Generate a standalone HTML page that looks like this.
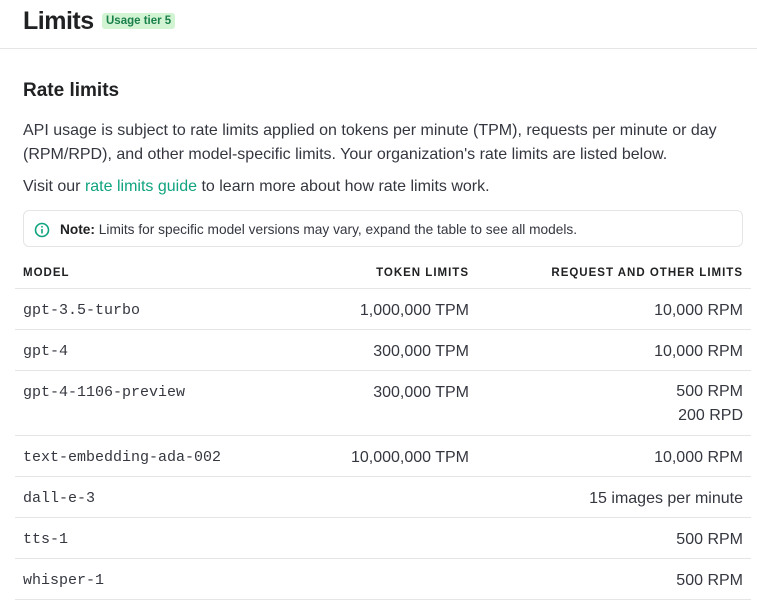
<!DOCTYPE html>
<html><head><style>
*{margin:0;padding:0;box-sizing:border-box}
body{width:757px;height:603px;overflow:hidden;background:#fff;font-family:"Liberation Sans",sans-serif;color:#202123}
.hdr{height:49px;border-bottom:1px solid #e5e5e5;position:relative}
h1{position:absolute;left:23px;top:7px;font-size:25px;font-weight:bold;letter-spacing:-0.5px}
.badge{position:absolute;left:102px;top:13px;height:16px;padding:0 4px;background:#d2f4d3;color:#1a7f4b;font-size:11.5px;font-weight:bold;border-radius:3px;line-height:16px}
h2{position:absolute;left:23px;top:80px;font-size:19px;font-weight:bold}
p{position:absolute;left:23px;font-size:16px;color:#353740;line-height:24px}
a{color:#10a37f;text-decoration:none}
.note{position:absolute;left:23px;top:210px;width:720px;height:37px;border:1px solid #e5e5e5;border-radius:6px;font-size:13.7px;color:#353740;line-height:37px;padding-left:36px}
.note svg{position:absolute;left:10px;top:11px}
table{position:absolute;left:15px;top:258px;width:736px;border-collapse:collapse}
th{font-size:11.5px;letter-spacing:1px;font-weight:bold;text-align:left;height:30px;padding:0 8px;border-bottom:1px solid #e5e5e5;color:#202123}
td{font-size:16px;color:#353740;padding:11px 8px 0;height:41px;vertical-align:top;border-bottom:1px solid #e5e5e5;line-height:22px}
td.m{font-family:"Liberation Mono",monospace;font-size:15px;color:#353740}
.r{text-align:right}
</style></head><body>
<div class="hdr"><h1>Limits</h1><span class="badge">Usage tier 5</span></div>
<h2>Rate limits</h2>
<p style="top:119px">API usage is subject to rate limits applied on tokens per minute (TPM), requests per minute or day (RPM/RPD), and other model-specific limits. Your organization's rate limits are listed below.</p>
<p style="top:175px">Visit our <a>rate limits guide</a> to learn more about how rate limits work.</p>
<div class="note"><svg width="16" height="16" viewBox="0 0 16 16"><circle cx="8" cy="8" r="6.5" fill="none" stroke="#10a37f" stroke-width="1.6"/><line x1="8" y1="7" x2="8" y2="11.5" stroke="#10a37f" stroke-width="1.6"/><circle cx="8" cy="4.8" r="0.9" fill="#10a37f"/></svg><b style="color:#202123">Note:</b> Limits for specific model versions may vary, expand the table to see all models.</div>
<table>
<tr><th style="width:240px">MODEL</th><th class="r" style="width:222px">TOKEN LIMITS</th><th class="r">REQUEST AND OTHER LIMITS</th></tr>
<tr><td class="m">gpt-3.5-turbo</td><td class="r">1,000,000 TPM</td><td class="r">10,000 RPM</td></tr>
<tr><td class="m">gpt-4</td><td class="r">300,000 TPM</td><td class="r">10,000 RPM</td></tr>
<tr><td class="m" style="height:65px">gpt-4-1106-preview</td><td class="r">300,000 TPM</td><td class="r" style="line-height:24px;padding-top:9px">500 RPM<br>200 RPD</td></tr>
<tr><td class="m">text-embedding-ada-002</td><td class="r">10,000,000 TPM</td><td class="r">10,000 RPM</td></tr>
<tr><td class="m">dall-e-3</td><td class="r"></td><td class="r">15 images per minute</td></tr>
<tr><td class="m">tts-1</td><td class="r"></td><td class="r">500 RPM</td></tr>
<tr><td class="m">whisper-1</td><td class="r"></td><td class="r">500 RPM</td></tr>
</table>
</body></html>
